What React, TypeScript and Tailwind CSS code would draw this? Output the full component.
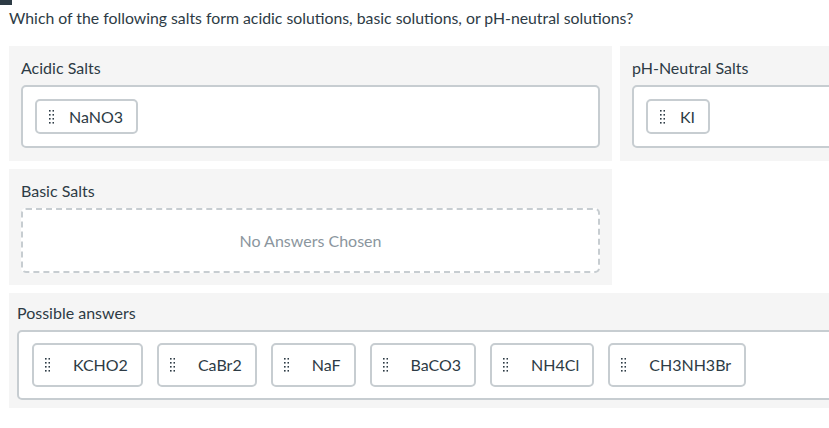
import React from 'react'

/**
 * Sorting question — drag salts into acidic / basic / neutral buckets.
 */

const FONT = { fontFamily: 'Lato, "Open Sans", sans-serif' }

function Grip() {
  const dots = []
  for (let r = 0; r < 4; r++) {
    for (let c = 0; c < 2; c++) {
      dots.push(<rect key={`${r}-${c}`} x={c * 3.5} y={r * 4} width="1.6" height="1.6" fill="#2d3b45" />)
    }
  }
  return (
    <svg width="5" height="14" viewBox="0 0 5 14" className="shrink-0">
      {dots}
    </svg>
  )
}

function Chip({ label, big }: { label: string; big?: boolean }) {
  return (
    <div
      className={`flex items-center bg-white border-2 border-[#c7cdd1] rounded-[5px] text-[16px] text-[#2d3b45] ${
        big ? 'h-[44px] pl-[11px] pr-[13px] gap-[23px]' : 'h-[35px] pl-[12px] pr-[13px] gap-[15px]'
      }`}
    >
      <Grip />
      <span>{label}</span>
    </div>
  )
}

function Bucket({ title, items }: { title: string; items: string[] }) {
  return (
    <div className="bg-[#f5f5f5] pt-3 pb-[13px] px-3">
      <div className="text-[16px] leading-5 text-[#2d3b45] mb-[7px]">{title}</div>
      <div className="bg-white border-2 border-[#c7cdd1] rounded-[5px] p-3 flex gap-[14px]">
        {items.map(i => <Chip key={i} label={i} />)}
      </div>
    </div>
  )
}

const ANSWERS = ['KCHO2', 'CaBr2', 'NaF', 'BaCO3', 'NH4Cl', 'CH3NH3Br']

export default function App() {
  return (
    <div className="w-[829px] h-[428px] overflow-hidden bg-white" style={FONT}>
      <div className="w-3 h-[5px] bg-[#2d3b45]" />
      <div className="pl-[9px] mt-[3px] text-[15.8px] leading-5 text-[#2d3b45] whitespace-nowrap">
        Which of the following salts form acidic solutions, basic solutions, or pH-neutral solutions?
      </div>

      <div className="mt-[18px] pl-[9px] grid grid-cols-[603px_300px] gap-2 w-[920px]">
        <Bucket title="Acidic Salts" items={['NaNO3']} />
        <Bucket title="pH-Neutral Salts" items={['KI']} />

        <div className="bg-[#f5f5f5] pt-3 pb-3 px-3">
          <div className="text-[16px] leading-5 text-[#2d3b45] mb-[7px]">Basic Salts</div>
          <div className="h-[65px] bg-white border-2 border-dashed border-[#c7cdd1] rounded-[5px] flex items-center justify-center text-[16px] text-[#8b969e]">
            No Answers Chosen
          </div>
        </div>
        <div />

        <div className="col-span-2 bg-[#f5f5f5] pt-[10px] pb-2 px-2">
          <div className="text-[16px] leading-5 text-[#2d3b45] mb-[7px]">Possible answers</div>
          <div className="bg-white border-2 border-[#c7cdd1] rounded-[5px] pt-[11px] pb-[11px] pl-[13px] flex gap-[14px]">
            {ANSWERS.map(a => <Chip key={a} label={a} big />)}
          </div>
        </div>
      </div>
    </div>
  )
}
